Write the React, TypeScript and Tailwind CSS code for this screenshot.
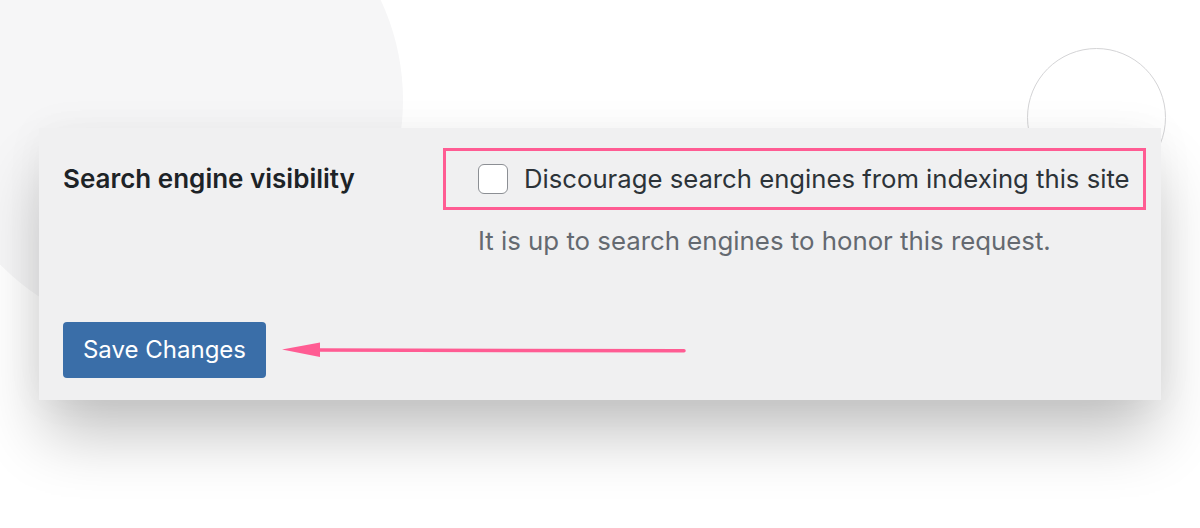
export default function App() {
  return (
    <div className="relative w-full h-[528px] overflow-hidden bg-white font-['Inter',sans-serif]">
      {/* background decorations */}
      <div className="absolute left-[-67px] top-[-135px] w-[470px] h-[470px] rounded-full bg-[#f6f6f7]" />
      <div className="absolute left-[1027px] top-[48px] w-[139px] h-[139px] rounded-full border border-[#d4d4d6]" />

      {/* settings card */}
      <div className="relative ml-[39px] mt-[128px] w-[1122px] h-[272px] bg-[#f0f0f1] pt-5 pl-6 shadow-[0_40px_60px_-6px_rgba(0,0,0,0.24),0_0_40px_rgba(0,0,0,0.04)]">
        <div className="flex">
          <div className="w-[380px] pt-[16px] text-[26px] font-semibold leading-[30px] text-[#1d2327]">
            Search engine visibility
          </div>
          <div className="flex flex-col">
            <label className="flex items-center w-[703px] h-[62px] border-[3px] border-[#ff5c93] pl-[32px]">
              <span className="w-[30px] h-[30px] rounded-[6px] border-[1.5px] border-[#8c8f94] bg-white shrink-0" />
              <span className="ml-4 text-[25.7px] leading-[30px] text-[#2c3338]">
                Discourage search engines from indexing this site
              </span>
            </label>
            <p className="ml-[35px] mt-[16px] text-[25.8px] leading-[30px] text-[#646970]">
              It is up to search engines to honor this request.
            </p>
          </div>
        </div>

        <div className="flex items-center mt-[66px]">
          <button className="w-[203px] h-[56px] rounded-[4px] bg-[#3a6ea8] text-white text-[24px]">
            Save Changes
          </button>
          <svg width="406" height="20" viewBox="0 0 406 20" className="ml-[16px]">
            <line x1="34" y1="10" x2="402" y2="10.8" stroke="#ff5c93" strokeWidth="3.5" strokeLinecap="round" />
            <polygon points="0,9.5 38,2.5 38,17" fill="#ff5c93" />
          </svg>
        </div>
      </div>
    </div>
  )
}
